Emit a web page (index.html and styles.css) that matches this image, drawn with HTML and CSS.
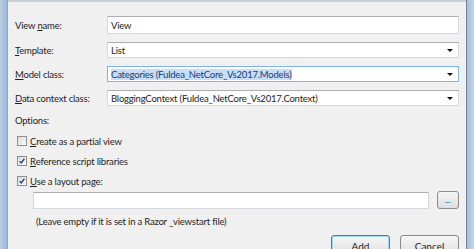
FILE: index.html
```html
<!DOCTYPE html>
<html lang="en">
<head>
    <meta charset="UTF-8">
    <title>Add MVC View</title>
    <link rel="stylesheet" href="styles.css">
</head>
<body>
    <div class="window">
        <div class="frame-left"></div>
        <div class="client">
            <div class="fields">
                <label class="field-label">View <u>n</u>ame:</label>
                <div class="textbox first">View</div>

                <label class="field-label"><u>T</u>emplate:</label>
                <div class="combo"><span>List</span><i class="arrow"></i></div>

                <label class="field-label"><u>M</u>odel class:</label>
                <div class="combo focused"><span class="selected">Categories (FuIdea_NetCore_Vs2017.Models)</span><i class="arrow"></i></div>

                <label class="field-label"><u>D</u>ata context class:</label>
                <div class="combo"><span>BloggingContext (FuIdea_NetCore_Vs2017.Context)</span><i class="arrow"></i></div>
            </div>

            <div class="options-title">Options:</div>
            <div class="check-row"><span class="checkbox"></span><u>C</u>reate as a partial view</div>
            <div class="check-row"><span class="checkbox checked"><svg viewBox="0 0 10 10"><path d="M2 5.2 L4 7.4 L8 2.2" /></svg></span><u>R</u>eference script libraries</div>
            <div class="check-row"><span class="checkbox checked"><svg viewBox="0 0 10 10"><path d="M2 5.2 L4 7.4 L8 2.2" /></svg></span><u>U</u>se a layout page:</div>

            <div class="layout-row">
                <div class="textbox layout-path"></div>
                <button class="btn browse">...</button>
            </div>
            <div class="hint">(Leave empty if it is set in a Razor _viewstart file)</div>

            <div class="actions">
                <button class="btn default">Add</button>
                <button class="btn">Cancel</button>
            </div>
        </div>
        <div class="frame-right"></div>
    </div>
</body>
</html>
```

FILE: styles.css
```css
body {
    margin: 0;
    background: #a7bfd8;
    font-family: Lato, "Open Sans", sans-serif;
    font-size: 9.5px;
    letter-spacing: -0.2px;
    color: #1e1e1e;
    overflow: hidden;
}
.window {
    display: flex;
    height: 249px;
}
.frame-left {
    width: 7px;
    background: linear-gradient(to right, #b9cde2, #9db8d6);
    border-right: 1px solid #8ea6c0;
}
.frame-right {
    width: 7px;
    background: linear-gradient(to right, #a9c0d8, #c3d4e6);
    border-left: 1px solid #6f849b;
}
.client {
    flex: 1;
    background: #f0f0f0;
    border-top: 2px solid #c7cfd8;
    padding: 14px 7px 0 7px;
}
.fields {
    display: grid;
    grid-template-columns: 92px 1fr;
    row-gap: 8px;
    align-items: center;
}
.field-label {
    white-space: nowrap;
}
.textbox, .combo {
    height: 16px;
    background: #fff;
    border: 1px solid #d5d8dc;
    border-top-color: #abadb3;
    box-sizing: border-box;
    display: flex;
    align-items: center;
    padding-left: 3px;
}
.textbox.first {
    height: 18px;
}
.combo {
    justify-content: space-between;
    padding-right: 5px;
}
.combo.focused {
    border-color: #7eb4ea;
}
.selected {
    background: #c6def7;
    color: #1a3a78;
}
.arrow {
    width: 0;
    height: 0;
    border-left: 3px solid transparent;
    border-right: 3px solid transparent;
    border-top: 3px solid #111;
}
.options-title {
    margin-top: 9px;
    height: 16px;
}
.check-row {
    display: flex;
    align-items: center;
    height: 20px;
    padding-left: 2px;
}
.checkbox {
    width: 10px;
    height: 10px;
    box-sizing: border-box;
    border: 1px solid #8f8f8f;
    background: linear-gradient(135deg, #dcdcdc, #fafafa);
    margin-right: 3px;
    display: flex;
}
.checkbox svg {
    width: 8px;
    height: 8px;
    fill: none;
    stroke: #1c3f8a;
    stroke-width: 1.6;
}
.layout-row {
    display: flex;
    align-items: center;
    gap: 8px;
    margin: 0 0 0 18px;
}
.layout-path {
    flex: 1;
    height: 17px;
}
.btn {
    font-family: inherit;
    font-size: 10px;
    color: #1e1e1e;
    border: 1px solid #8a8a8a;
    border-radius: 3px;
    background: linear-gradient(#f6f6f6, #dedede);
    padding: 0;
}
.browse {
    width: 22px;
    height: 18px;
    font-size: 8px;
}
.hint {
    margin: 7px 0 0 21px;
}
.actions {
    display: flex;
    justify-content: flex-end;
    gap: 10px;
    margin-top: 8px;
}
.actions .btn {
    width: 59px;
    height: 22px;
}
.actions .btn.default {
    border-color: #3c7fb1;
    box-shadow: inset 0 0 0 1px #a6d8f3;
}
```
